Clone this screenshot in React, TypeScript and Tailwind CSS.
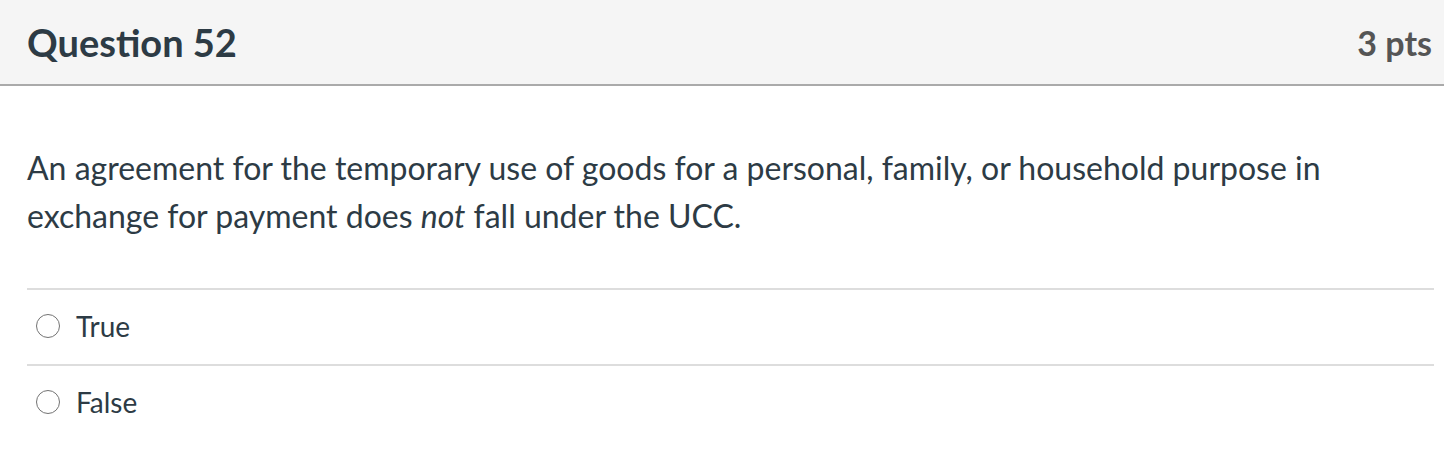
const answers = ["True", "False"];

const AnswerRow = ({ label }: { label: string }) => {
  return (
    <label className="flex items-center h-[76px] pb-[3px] border-t-2 border-[#dddddd]">
      <span className="ml-[9px] w-[24px] h-[24px] rounded-full border-[1.5px] border-[#737373] bg-white" />
      <span className="ml-[16px] text-[28px] text-[#2d3b45]">{label}</span>
    </label>
  );
};

export default function App() {
  return (
    <div
      className="w-[1444px] h-[474px] bg-white overflow-hidden"
      style={{ fontFamily: "Lato, 'Noto Sans', sans-serif" }}
    >
      <div className="flex items-center justify-between h-[86px] bg-[#f5f5f5] border-b-2 border-[#aaaaaa] pl-[27px] pr-[12px]">
        <h2 className="text-[38px] font-bold text-[#2d3b45]">Question 52</h2>
        <span className="text-[34px] font-bold text-[#555555]">3 pts</span>
      </div>
      <div className="pl-[27px] pr-[10px]">
        <p className="pt-[58px] pb-[48px] text-[32px] leading-[48px] text-[#2d3b45]">
          An agreement for the temporary use of goods for a personal, family, or household purpose in
          <br />
          exchange for payment does <em>not</em> fall under the UCC.
        </p>
        <div>
          {answers.map((a) => (
            <AnswerRow key={a} label={a} />
          ))}
        </div>
      </div>
    </div>
  );
}
